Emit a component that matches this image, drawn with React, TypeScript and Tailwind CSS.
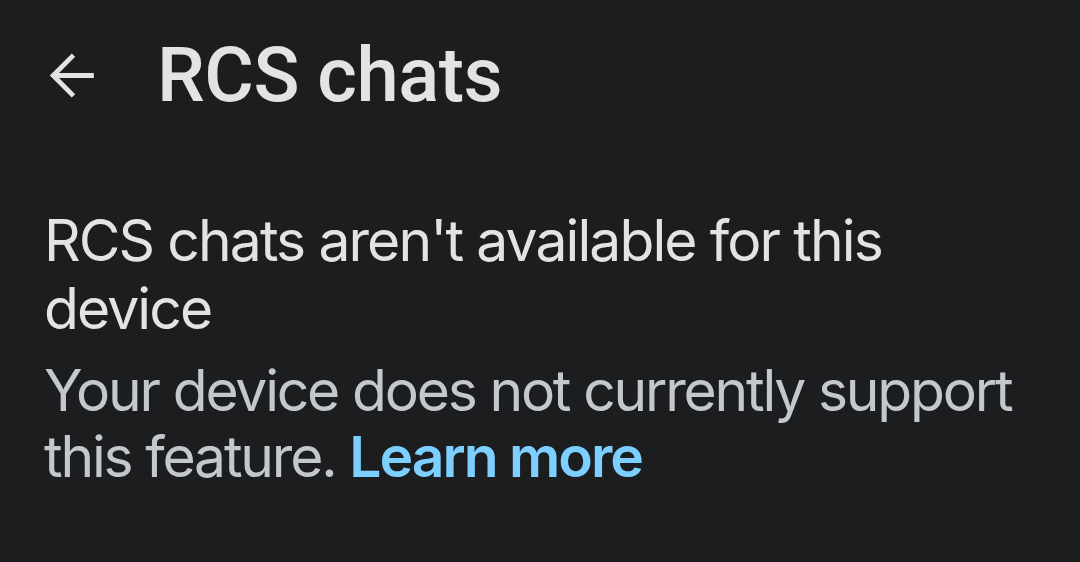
import React from "react";

export default function App() {
  return (
    <div className="w-[1080px] h-[562px] bg-[#1c1d1f] overflow-hidden" style={{ fontFamily: "Roboto, 'Open Sans', sans-serif" }}>
      <div className="flex items-center h-[150px] pl-[43px]">
        <svg width="61" height="61" viewBox="0 0 24 24" className="text-[#e3e3e3] shrink-0">
          <path d="M20 12H5M12 4l-8 8 8 8" fill="none" stroke="currentColor" strokeWidth="1.9" strokeLinecap="butt" />
        </svg>
        <h1 className="ml-[53px] text-[76px] leading-none text-[#e3e3e3] font-medium tracking-[-0.5px]">RCS chats</h1>
      </div>
      <div className="pl-[44px] pr-[40px] pt-[57px]" style={{ fontFamily: "Inter, Roboto, sans-serif" }}>
        <p className="text-[57px] leading-[68px] tracking-[-1.9px] text-[#e3e3e3] w-[900px]">RCS chats aren't available for this device</p>
        <p className="mt-[15px] text-[57px] leading-[66px] tracking-[-2.2px] text-[#c4c7cc] w-[1010px]">
          Your device does not currently support this feature. <span className="text-[#7ccfff] font-semibold tracking-[-2px]">Learn more</span>
        </p>
      </div>
    </div>
  );
}
